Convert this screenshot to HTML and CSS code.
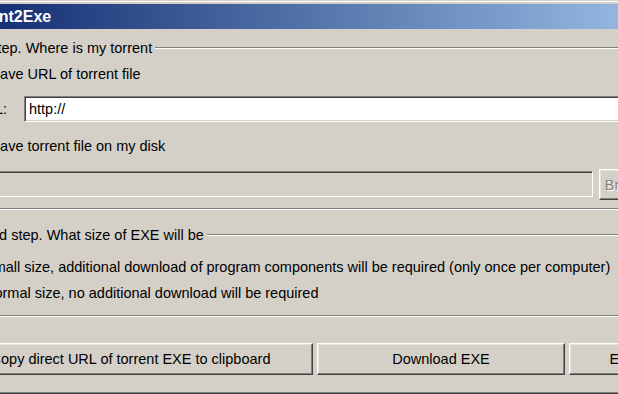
FILE: index.html
```html
<!DOCTYPE html>
<html lang="en">
<head>
<meta charset="UTF-8">
<title>Torrent2Exe</title>
<link rel="stylesheet" href="styles.css">
</head>
<body>
<div class="window">
    <div class="titlebar">Torrent2Exe</div>

    <div class="content">
        <!-- first step: where the torrent comes from -->
        <div class="group group-source">
            <div class="group-title">First step. Where is my torrent</div>

            <label class="option opt-url"><span class="radio checked"></span>I have URL of torrent file</label>
            <div class="field-row url-row">
                <span class="field-label">URL:</span>
                <input class="textbox url-box" type="text" value="http://">
            </div>

            <label class="option opt-disk"><span class="radio"></span>I have torrent file on my disk</label>
            <div class="field-row disk-row">
                <input class="textbox disk-box" type="text" disabled>
                <button class="btn browse" type="button" disabled>Browse...</button>
            </div>
        </div>

        <!-- second step: size of the exe -->
        <div class="group group-size">
            <div class="group-title">Second step. What size of EXE will be</div>
            <label class="option opt-small"><span class="radio"></span>Small size, additional download of program components will be required (only once per computer)</label>
            <label class="option opt-normal"><span class="radio checked"></span>Normal size, no additional download will be required</label>
        </div>

        <div class="actions">
            <button class="btn btn-copy" type="button">Copy direct URL of torrent EXE to clipboard</button>
            <button class="btn btn-download" type="button">Download EXE</button>
            <button class="btn btn-exit" type="button">Exit</button>
        </div>
    </div>
</div>
</body>
</html>
```

FILE: styles.css
```css
/* Ventana clasica de Windows, recortada por la izquierda */
* {
    box-sizing: border-box;
}
body {
    margin: 0;
    background-color: #d4d0c8;
    font-family: "Liberation Sans", Arial, sans-serif;
    font-size: 14.5px;
    color: #000;
    overflow: hidden;
}

.window {
    margin-left: -62px;
    width: 780px;
    height: 394px;
    padding: 3px 4px 0;
    border-top: 1px solid #d4d0c8;
    border-bottom: 1px solid #404040;
    box-shadow: inset 0 1px #fff, inset 0 -1px #808080;
}

.titlebar {
    height: 25px;
    line-height: 25px;
    padding-left: 17px;
    background: linear-gradient(to right, #0a246a, #a6caf0);
    color: #fff;
    font-size: 16px;
    font-weight: bold;
}

.content {
    padding: 0 4px;
}

/* group boxes */
.group {
    padding: 0 8px 0 12px;
    border-bottom: 1px solid #808080;
    box-shadow: 0 1px #fff;
}
.group-source {
    margin-top: 11px;
    padding-bottom: 8px;
}
.group-size {
    margin-top: 18px;
    padding-bottom: 14px;
}
.group-title {
    display: flex;
    align-items: center;
    height: 16px;
    line-height: 16px;
    white-space: nowrap;
}
.group-title::after {
    content: "";
    flex: 1;
    margin-left: 3px;
    border-top: 1px solid #808080;
    border-bottom: 1px solid #fff;
}

/* radio options */
.option {
    display: flex;
    align-items: center;
    height: 16px;
    line-height: 16px;
    white-space: nowrap;
}
.radio {
    width: 18px;
    height: 18px;
    margin-right: 8px;
    border-radius: 50%;
    background: #fff;
    border: 1px solid #808080;
    border-right-color: #fff;
    border-bottom-color: #fff;
    flex-shrink: 0;
    position: relative;
}
.radio.checked::after {
    content: "";
    position: absolute;
    left: 5px;
    top: 5px;
    width: 6px;
    height: 6px;
    border-radius: 50%;
    background: #000;
}
.opt-url {
    margin-top: 10px;
}
.opt-disk {
    margin-top: 16px;
}
.opt-small {
    margin-top: 16px;
}
.opt-normal {
    margin-top: 10px;
}

/* text fields */
.field-row {
    display: flex;
}
.url-row {
    margin-top: 14px;
    height: 26px;
    align-items: center;
    padding-left: 16px;
}
.field-label {
    width: 50px;
}
.disk-row {
    margin-top: 15px;
    height: 31px;
    padding-left: 26px;
}
.textbox {
    height: 26px;
    padding: 0 4px;
    font: inherit;
    color: #000;
    background: #fff;
    border: 1px solid;
    border-color: #808080 #fff #fff #808080;
    box-shadow: inset 1px 1px #404040, inset -1px -1px #d4d0c8;
    outline: none;
}
.url-box {
    flex: 1;
}
.disk-box {
    width: 609px;
    margin-top: 2px;
    background: #d4d0c8;
}

/* buttons */
.btn {
    height: 32px;
    padding: 0;
    font: inherit;
    color: #000;
    background: #d4d0c8;
    border: 1px solid;
    border-color: #fff #404040 #404040 #fff;
    box-shadow: inset -1px -1px #808080, inset 1px 1px #e6e3dd;
    text-align: center;
    white-space: nowrap;
}
.btn:disabled {
    color: #808080;
    text-shadow: 1px 1px #fff;
}
.browse {
    width: 72px;
    height: 31px;
    margin-left: 6px;
}
.actions {
    display: flex;
    gap: 4px;
    margin-top: 27px;
    padding-left: 2px;
}
.btn-copy {
    width: 365px;
}
.btn-download {
    width: 248px;
}
.btn-exit {
    width: 105px;
}
```
